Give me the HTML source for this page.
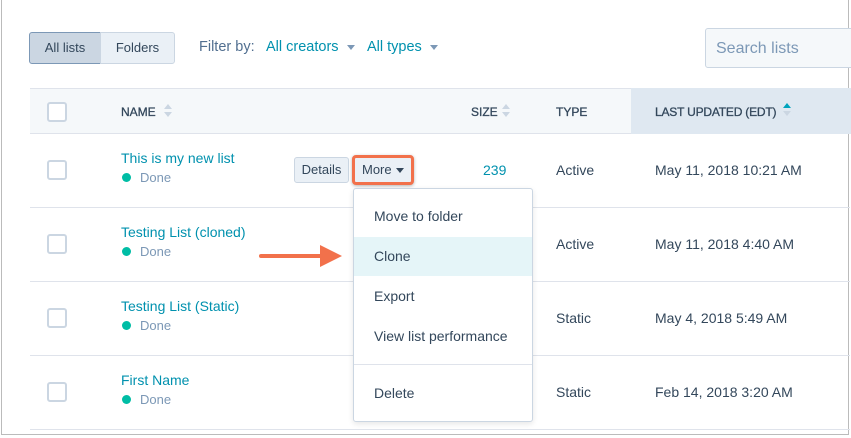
<!DOCTYPE html>
<html><head><style>
*{margin:0;padding:0;box-sizing:border-box}
body{width:851px;height:438px;background:#fff;font-family:"Liberation Sans",sans-serif;position:relative;overflow:hidden;color:#33475b}
.a{position:absolute}
.frame{left:1px;top:0;width:848px;height:435px;border:1px solid #bbb;border-top:none}
.t{font-size:14px}
.link{color:#0091ae}
.cb{width:20px;height:20px;border:2px solid #cbd6e2;border-radius:3px;background:#fff}
.row{left:30px;width:820px;border-bottom:1px solid #dfe3eb}
.dot{width:9px;height:9px;border-radius:50%;background:#00bda5}
.done{font-size:13px;color:#7c98b6}
.hd{font-size:12px;color:#33475b;-webkit-text-stroke:.3px #33475b}
.sort{width:0;height:0;border-left:4px solid transparent;border-right:4px solid transparent}
.caret{display:inline-block;width:0;height:0;border-left:4px solid transparent;border-right:4px solid transparent;border-top:5px solid #0091ae;vertical-align:middle;margin-left:8px}
</style></head><body>
<div class="a frame"></div>
<div class="a" style="left:29px;top:32px;width:72px;height:32px;background:#cbd6e2;border:1px solid #7c98b6;border-radius:3px 0 0 3px;font-size:13px;text-align:center;line-height:30px;color:#33475b">All lists</div>
<div class="a" style="left:100px;top:32px;width:75px;height:32px;background:#eaf0f6;border:1px solid #cbd6e2;border-radius:0 3px 3px 0;font-size:13px;text-align:center;line-height:30px;color:#33475b">Folders</div>
<div class="a" style="left:199px;top:39px;font-size:14.5px;color:#516f90">Filter by:</div>
<div class="a link" style="left:266px;top:39px;font-size:14.5px">All creators<span class="caret" style="border-top-color:#7c98b6"></span></div>
<div class="a link" style="left:367px;top:39px;font-size:14.5px">All types<span class="caret" style="border-top-color:#7c98b6"></span></div>
<div class="a" style="left:705px;top:28px;width:150px;height:40px;background:#f5f8fa;border:1px solid #cbd6e2;border-radius:3px;font-size:16px;color:#7c98b6;padding:11px 0 0 10px">Search lists</div>
<div class="a" style="left:30px;top:88px;width:820px;height:46px;background:#f5f8fa;border-top:1px solid #dfe3eb;border-bottom:1px solid #dfe3eb"></div>
<div class="a" style="left:631px;top:88px;width:220px;height:46px;background:#dfe8f1"></div>
<div class="a cb" style="left:47px;top:102px"></div>
<div class="a hd" style="left:121px;top:105px">NAME</div>
<div class="a sort" style="left:164px;top:104px;border-bottom:5px solid #cbd6e2"></div>
<div class="a sort" style="left:164px;top:112px;border-top:5px solid #cbd6e2"></div>
<div class="a hd" style="left:471px;top:105px">SIZE</div>
<div class="a sort" style="left:502px;top:104px;border-bottom:5px solid #cbd6e2"></div>
<div class="a sort" style="left:502px;top:112px;border-top:5px solid #cbd6e2"></div>
<div class="a hd" style="left:556px;top:105px">TYPE</div>
<div class="a hd" style="left:655px;top:105px;letter-spacing:-.2px">LAST UPDATED (EDT)</div>
<div class="a sort" style="left:783px;top:103px;border-bottom:5px solid #00a4bd"></div>
<div class="a sort" style="left:783px;top:111px;border-top:5px solid #cbd6e2"></div>
<div class="a row" style="top:134px;height:74px"></div>
<div class="a row" style="top:208px;height:74px"></div>
<div class="a row" style="top:282px;height:74px"></div>
<div class="a row" style="top:356px;height:74px"></div>

<div class="a cb" style="left:47px;top:160px"></div>
<div class="a t link" style="left:121px;top:150px">This is my new list</div>
<div class="a dot" style="left:122px;top:173px"></div><div class="a done" style="left:140px;top:170px">Done</div>
<div class="a" style="left:294px;top:157px;width:55px;height:26px;background:#eaf0f6;border:1px solid #cbd6e2;border-radius:3px;font-size:13px;text-align:center;line-height:24px">Details</div>
<div class="a" style="left:352px;top:155px;width:62px;height:30px;border:3px solid #f2714b;border-radius:4px;background:#eaf0f6;font-size:13px;line-height:24px;padding-left:7px;box-shadow:0 1px 3px rgba(0,0,0,.3)">More<span class="caret" style="border-top-color:#33475b;margin-left:4px"></span></div>
<div class="a t link" style="left:483px;top:162px">239</div>
<div class="a t" style="left:556px;top:162px">Active</div>
<div class="a t" style="left:655px;top:162px">May 11, 2018 10:21 AM</div>

<div class="a cb" style="left:47px;top:234px"></div>
<div class="a t link" style="left:121px;top:224px">Testing List (cloned)</div>
<div class="a dot" style="left:122px;top:247px"></div><div class="a done" style="left:140px;top:244px">Done</div>
<div class="a t" style="left:556px;top:236px">Active</div>
<div class="a t" style="left:655px;top:236px">May 11, 2018 4:40 AM</div>

<div class="a cb" style="left:47px;top:308px"></div>
<div class="a t link" style="left:121px;top:298px">Testing List (Static)</div>
<div class="a dot" style="left:122px;top:321px"></div><div class="a done" style="left:140px;top:318px">Done</div>
<div class="a t" style="left:556px;top:310px">Static</div>
<div class="a t" style="left:655px;top:310px">May 4, 2018 5:49 AM</div>

<div class="a cb" style="left:47px;top:382px"></div>
<div class="a t link" style="left:121px;top:372px">First Name</div>
<div class="a dot" style="left:122px;top:395px"></div><div class="a done" style="left:140px;top:392px">Done</div>
<div class="a t" style="left:556px;top:384px">Static</div>
<div class="a t" style="left:655px;top:384px">Feb 14, 2018 3:20 AM</div>

<div class="a" style="left:353px;top:188px;width:180px;height:234px;background:#fff;border:1px solid #cbd6e2;border-radius:3px;box-shadow:0 2px 6px rgba(0,0,0,.1)">
<div class="a" style="left:0;top:48px;width:178px;height:39px;background:#e5f5f8"></div>
<div class="a t" style="left:20px;top:19px">Move to folder</div>
<div class="a t" style="left:20px;top:59px">Clone</div>
<div class="a t" style="left:20px;top:99px">Export</div>
<div class="a t" style="left:20px;top:139px">View list performance</div>
<div class="a" style="left:0;top:175px;width:178px;height:1px;background:#dfe3eb"></div>
<div class="a t" style="left:20px;top:196px">Delete</div>
</div>
<svg class="a" style="left:258px;top:242px" width="90" height="30"><line x1="3" y1="14" x2="66" y2="14" stroke="#f2714b" stroke-width="4" stroke-linecap="round"/><polygon points="62,3 84,14 62,25" fill="#f2714b"/></svg>
</body></html>
